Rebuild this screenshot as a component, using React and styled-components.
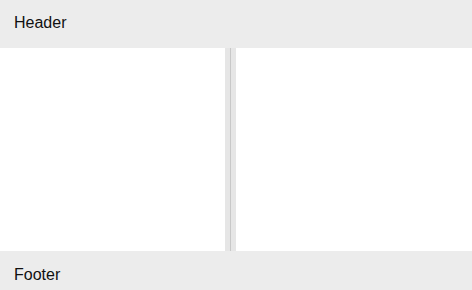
import React from "react";
import styled, { createGlobalStyle } from "styled-components";

const GlobalStyle = createGlobalStyle`
  html, body, #root {
    margin: 0;
    height: 100%;
  }
  body {
    font-family: "Liberation Sans", Arial, sans-serif;
    background: #fff;
    overflow: hidden;
  }
`;

const Layout = styled.div`
  display: flex;
  flex-direction: column;
  height: 100vh;
`;

const Bar = styled.div`
  box-sizing: border-box;
  height: ${(p) => p.h}px;
  padding: ${(p) => p.top}px 14px 0;
  background: #ececec;
  color: #111;
  font-size: 16px;
  line-height: 18px;
  flex-shrink: 0;
`;

const Body = styled.div`
  flex: 1;
  display: flex;
  min-height: 0;
`;

const Pane = styled.div`
  flex: ${(p) => (p.w ? `0 0 ${p.w}px` : "1")};
  background: #fff;
`;

const Splitter = styled.div`
  width: 11px;
  flex-shrink: 0;
  background: #e6e6e6;
  display: flex;
  justify-content: center;
  cursor: col-resize;
  &::after {
    content: "";
    width: 1px;
    background: #c8c8c8;
  }
`;

export default function App() {
  return (
    <>
      <GlobalStyle />
      <Layout>
        <Bar h={48} top={14}>Header</Bar>
        <Body>
          <Pane w={225} />
          <Splitter />
          <Pane />
        </Body>
        <Bar h={39} top={15}>Footer</Bar>
      </Layout>
    </>
  );
}
